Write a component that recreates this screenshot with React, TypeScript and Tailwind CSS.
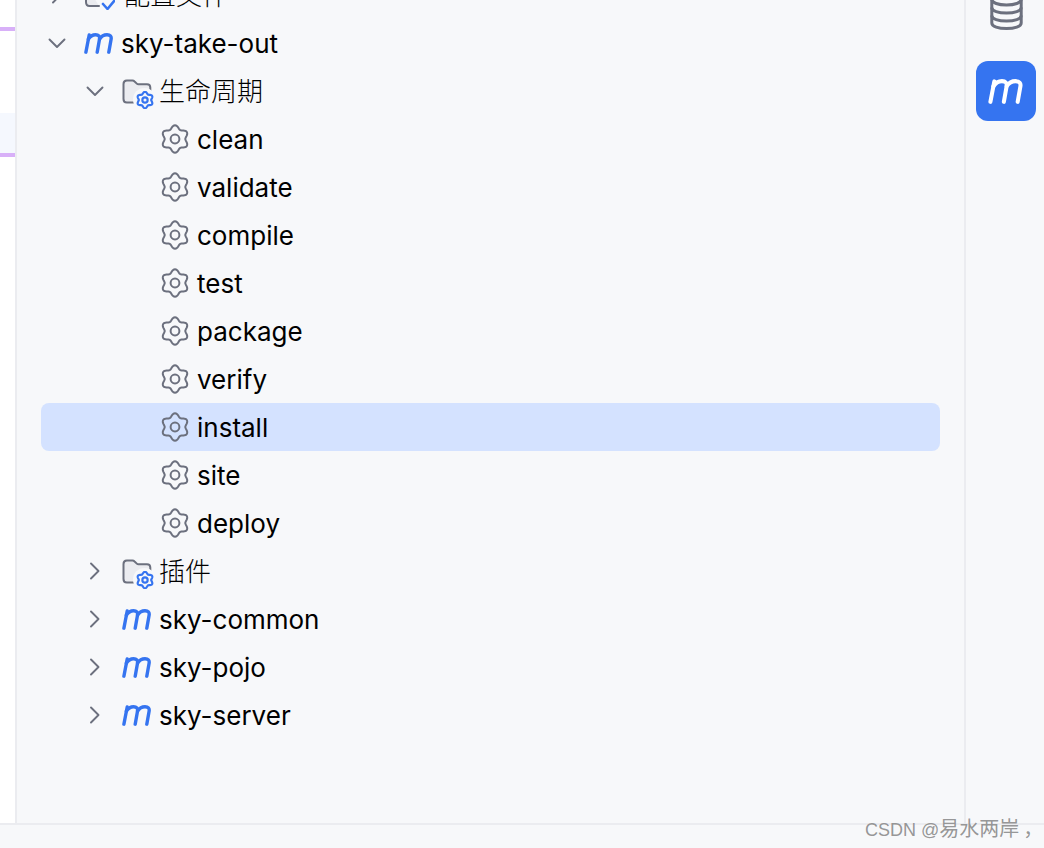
function Chevron({ open }: { open: boolean }) {
  return (
    <svg width="20" height="20" viewBox="0 0 20 20" fill="none" stroke="#6c707e" strokeWidth="1.9" strokeLinecap="round" strokeLinejoin="round">
      {open ? <path d="M2.5 6.5 L10 14 L17.5 6.5" /> : <path d="M6 2.5 L13.5 10 L6 17.5" />}
    </svg>
  );
}

function MavenIcon({ color = '#3574f0', width = 30, height = 21 }: { color?: string; width?: number; height?: number }) {
  return (
    <svg width={width} height={height} viewBox="0 0 30 21" fill="none" stroke={color} strokeWidth="3.4" strokeLinecap="round" strokeLinejoin="round">
      <path d="M1.9 19.2 L5.2 2" />
      <path d="M4.4 6.2 C6.4 3 9.2 1.8 11.6 1.8 C14.6 1.8 16 3.4 15.5 6.2 L13.2 19.2" />
      <path d="M15.6 6 C17.6 3 20.6 1.8 23 1.8 C26.2 1.8 27.6 3.4 27.1 6.2 L24.8 19.2" />
    </svg>
  );
}

// rounded six lobe outline, same shape as the IDE's run config gear
const gearPath = Array.from({ length: 96 }, (_, i) => {
  const a = (i / 96) * Math.PI * 2;
  const r = 12 + 1.7 * Math.cos(6 * (a + Math.PI / 2));
  return `${i === 0 ? 'M' : 'L'}${(15 + r * Math.cos(a)).toFixed(2)} ${(15 + r * Math.sin(a)).toFixed(2)}`;
}).join(' ') + ' Z';

function Gear({ size = 30, color = '#6c707e', width = 2 }: { size?: number; color?: string; width?: number }) {
  return (
    <svg width={size} height={size} viewBox="0 0 30 30" fill="none" stroke={color} strokeWidth={width} strokeLinejoin="round">
      <path d={gearPath} />
      <circle cx="15" cy="15" r="4.4" />
    </svg>
  );
}

function FolderGear() {
  return (
    <div className="relative w-[32px] h-[30px]">
      <svg width="32" height="30" viewBox="0 0 32 30" fill="none">
        <path d="M2.5 8 C2.5 6 3.8 4.5 5.8 4.5 L11.5 4.5 C12.4 4.5 13 4.9 13.6 5.5 L15.8 7.6 C16.3 8.1 16.8 8.3 17.5 8.3 L26 8.3 C28 8.3 29.3 9.6 29.3 11.6 L29.3 23 C29.3 25.2 28 26.5 26 26.5 L5.8 26.5 C3.8 26.5 2.5 25.2 2.5 23 Z" fill="#ebecf0" stroke="#6c707e" strokeWidth="2" />
      </svg>
      <div className="absolute left-[12px] top-[12px] w-[23px] h-[23px] rounded-full bg-[#f7f8fa] flex items-center justify-center">
        <Gear size={18} color="#3574f0" width={3.6} />
      </div>
    </div>
  );
}

function ProfileIcon() {
  return (
    <svg width="32" height="30" viewBox="0 0 32 30" fill="none" strokeLinecap="round" strokeLinejoin="round">
      <path d="M3 4 L3 22 C3 25 4.5 26 6.5 26 L16 26" fill="#ebecf0" stroke="#6c707e" strokeWidth="2" />
      <path d="M20 24 L24.5 29 L31.5 20.5" stroke="#3574f0" strokeWidth="2.6" />
    </svg>
  );
}

type Row = { label: string; depth: number; arrow?: 'open' | 'closed'; icon: 'maven' | 'folder' | 'gear' | 'profile'; active?: boolean; cjk?: boolean };

const rows: Row[] = [
  { label: '配置文件', depth: 0, arrow: 'closed', icon: 'profile', cjk: true },
  { label: 'sky-take-out', depth: 0, arrow: 'open', icon: 'maven' },
  { label: '生命周期', depth: 1, arrow: 'open', icon: 'folder', cjk: true },
  { label: 'clean', depth: 2, icon: 'gear' },
  { label: 'validate', depth: 2, icon: 'gear' },
  { label: 'compile', depth: 2, icon: 'gear' },
  { label: 'test', depth: 2, icon: 'gear' },
  { label: 'package', depth: 2, icon: 'gear' },
  { label: 'verify', depth: 2, icon: 'gear' },
  { label: 'install', depth: 2, icon: 'gear', active: true },
  { label: 'site', depth: 2, icon: 'gear' },
  { label: 'deploy', depth: 2, icon: 'gear' },
  { label: '插件', depth: 1, arrow: 'closed', icon: 'folder', cjk: true },
  { label: 'sky-common', depth: 1, arrow: 'closed', icon: 'maven' },
  { label: 'sky-pojo', depth: 1, arrow: 'closed', icon: 'maven' },
  { label: 'sky-server', depth: 1, arrow: 'closed', icon: 'maven' },
];

const indents = ['pl-[6px]', 'pl-[44px]', 'pl-[119px]'];

function TreeRow({ row }: { row: Row }) {
  return (
    <div className={`h-[48px] rounded-lg flex items-center ${indents[row.depth]} ${row.active ? 'bg-[#d4e2ff]' : ''}`}>
      {row.arrow && (
        <div className="w-[20px] h-[20px] mr-[16px] shrink-0">
          <Chevron open={row.arrow === 'open'} />
        </div>
      )}
      <div className={`shrink-0 flex items-center ${row.icon === 'profile' ? 'w-[35px]' : 'w-[32px]'}`}>
        {row.icon === 'maven' && (
          <div className="pl-[1px] pt-[1px]">
            <MavenIcon />
          </div>
        )}
        {row.icon === 'folder' && <FolderGear />}
        {row.icon === 'gear' && <Gear />}
        {row.icon === 'profile' && <ProfileIcon />}
      </div>
      <span className={`mt-[2px] text-[26px] leading-none text-black ${row.icon === 'gear' ? 'ml-[5px]' : 'ml-[6px]'} ${row.cjk ? 'font-light' : ''}`}>{row.label}</span>
    </div>
  );
}

export default function App() {
  return (
    <div className="relative w-[1044px] h-[848px] overflow-hidden bg-[#f7f8fa] flex flex-col font-['Inter','Noto_Sans_CJK_SC',sans-serif]">
      <div className="flex-1 min-h-0 flex">
        {/* editor edge on the left */}
        <div className="w-[15px] shrink-0 bg-white flex flex-col">
          <div className="h-[27px]" />
          <div className="h-[4px] bg-[#d8b0f8]" />
          <div className="h-[82px]" />
          <div className="h-[40px] bg-[#f5f8fe]" />
          <div className="h-[4px] bg-[#d8b0f8]" />
        </div>
        <div className="w-[2px] shrink-0 bg-[#ebecf0]" />

        {/* maven tree */}
        <div className="w-[947px] shrink-0 pl-[24px] pr-[24px] -mt-[29px]">
          {rows.map((row) => (
            <TreeRow key={row.label} row={row} />
          ))}
        </div>
        <div className="w-[2px] shrink-0 bg-[#ebecf0]" />

        {/* right tool strip */}
        <div className="flex-1 flex flex-col items-center pl-[2px]">
          <div className="h-[30px] flex items-end overflow-hidden">
            <svg width="33" height="30" viewBox="0 0 33 30" fill="none" stroke="#6c707e" strokeWidth="3">
              <path d="M1.8 -4 L1.8 23 C1.8 26.5 8.5 28.5 16.5 28.5 C24.5 28.5 31.2 26.5 31.2 23 L31.2 -4" />
              <path d="M1.8 -1 C1.8 3 8.5 5 16.5 5 C24.5 5 31.2 3 31.2 -1" />
              <path d="M1.8 7.5 C1.8 11 8.5 13 16.5 13 C24.5 13 31.2 11 31.2 7.5" />
              <path d="M1.8 15.5 C1.8 19 8.5 21 16.5 21 C24.5 21 31.2 19 31.2 15.5" />
            </svg>
          </div>
          <div className="mt-[31px] w-[60px] h-[60px] rounded-xl bg-[#3574f0] flex items-center justify-center">
            <MavenIcon color="white" width={36} height={25} />
          </div>
        </div>
      </div>

      {/* status bar */}
      <div className="h-[25px] shrink-0 border-t-2 border-[#ebecf0] bg-[#f7f8fa]" />

      <span className="absolute left-[865px] top-[818px] text-[18px] leading-[22px] text-[#8a8a8a]/90 font-['Liberation_Sans','Noto_Sans_CJK_SC',sans-serif] whitespace-nowrap">
        CSDN @<span className="text-[20px]">易水两岸</span><span className="ml-[4px] text-[20px]">，</span>
      </span>
    </div>
  );
}
